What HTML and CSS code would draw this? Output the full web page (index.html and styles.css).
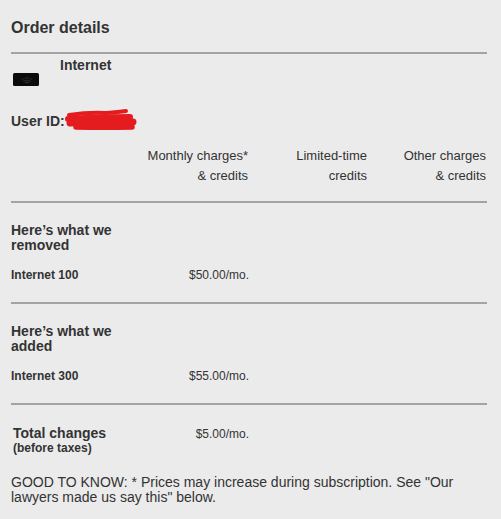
FILE: index.html
```html
<!DOCTYPE html>
<html>
<head>
<meta charset="utf-8">
<link rel="stylesheet" href="styles.css">
</head>
<body>
<div class="page">
  <h2 class="title">Order details</h2>
  <div class="rule"></div>

  <div class="product">
    <svg class="device" width="26" height="13" viewBox="0 0 26 13">
      <rect x="0" y="0" width="26" height="13" rx="1.5" fill="#0b0b0b"/>
      <path d="M10 8.5 Q14 5.5 18 8.5" stroke="#3a3a3a" stroke-width="0.8" fill="none"/>
      <path d="M8.5 7 Q14 2.8 19.5 7" stroke="#2c2c2c" stroke-width="0.8" fill="none"/>
      <path d="M12 9.8 Q14 8.6 16 9.8" stroke="#444" stroke-width="0.8" fill="none"/>
    </svg>
    <div class="product-name">Internet</div>
  </div>

  <div class="user">User ID:
    <svg class="redact" width="74" height="24" viewBox="0 0 74 24">
      <path d="M5 7 Q25 4 42 5 Q55 4 62 3" stroke="#e51c1f" stroke-width="4" stroke-linecap="round" fill="none"/>
      <path d="M4 11 Q30 9 66 9" stroke="#e51c1f" stroke-width="6" stroke-linecap="round" fill="none"/>
      <path d="M6 15 Q35 13 69 14" stroke="#e51c1f" stroke-width="7" stroke-linecap="round" fill="none"/>
      <path d="M12 19 Q40 19.5 68 19" stroke="#e51c1f" stroke-width="5.5" stroke-linecap="round" fill="none"/>
    </svg>
  </div>

  <div class="grid head">
    <div></div>
    <div class="head-cell">Monthly charges*<br>&amp; credits</div>
    <div class="head-cell">Limited-time<br>credits</div>
    <div class="head-cell">Other charges<br>&amp; credits</div>
  </div>
  <div class="rule"></div>

  <div class="section">
    <div class="sec-title">Here’s what we removed</div>
    <div class="grid item">
      <div class="item-name">Internet 100</div>
      <div class="num">$50.00/mo.</div>
      <div></div>
      <div></div>
    </div>
  </div>
  <div class="rule"></div>

  <div class="section">
    <div class="sec-title">Here’s what we added</div>
    <div class="grid item">
      <div class="item-name">Internet 300</div>
      <div class="num">$55.00/mo.</div>
      <div></div>
      <div></div>
    </div>
  </div>
  <div class="rule"></div>

  <div class="grid total">
    <div class="total-label">
      <div class="total-main">Total changes</div>
      <div class="total-sub">(before taxes)</div>
    </div>
    <div class="num">$5.00/mo.</div>
    <div></div>
    <div></div>
  </div>

  <p class="note">GOOD TO KNOW: * Prices may increase during subscription. See "Our lawyers made us say this" below.</p>
</div>
</body>
</html>
```

FILE: styles.css
```css
html, body {
  margin: 0;
  padding: 0;
  background: #ebebeb;
}
body {
  font-family: "Liberation Sans", Arial, sans-serif;
  color: #333333;
}
.page {
  width: 476px;
  margin-left: 11px;
}
.title {
  font-size: 16px;
  line-height: 20px;
  font-weight: bold;
  margin: 18px 0 14px 0;
}
.rule {
  height: 2px;
  background: #a3a3a3;
}
.product {
  display: flex;
  align-items: flex-start;
  padding-top: 3px;
}
.device {
  display: block;
  margin-left: 2px;
  margin-top: 16px;
}
.product-name {
  margin-left: 21px;
  font-size: 14px;
  line-height: 16px;
  font-weight: bold;
}
.user {
  position: relative;
  margin-top: 27px;
  font-size: 14px;
  line-height: 16px;
  font-weight: bold;
}
.redact {
  position: absolute;
  left: 53px;
  top: -5px;
}
.grid {
  display: grid;
  grid-template-columns: repeat(4, 1fr);
}
.num {
  text-align: right;
  font-size: 12px;
}
.head-cell {
  text-align: right;
  font-size: 13px;
  padding-right: 1px;
}
.head {
  margin-top: 17px;
  margin-bottom: 15px;
  line-height: 20px;
}
.section {
  padding: 20px 0;
}
.sec-title {
  width: 119px;
  font-size: 14px;
  line-height: 15px;
  font-weight: bold;
}
.item {
  margin-top: 15px;
  line-height: 14px;
}
.item-name {
  font-size: 12px;
  font-weight: bold;
}
.total {
  padding-top: 20px;
  align-items: baseline;
}
.total-label {
  padding-left: 2px;
  font-weight: bold;
}
.total-main {
  font-size: 14px;
  line-height: 16px;
}
.total-sub {
  font-size: 12px;
  line-height: 15px;
}
.note {
  margin: 19px 0 0 0;
  font-size: 14px;
  line-height: 15px;
}
```
